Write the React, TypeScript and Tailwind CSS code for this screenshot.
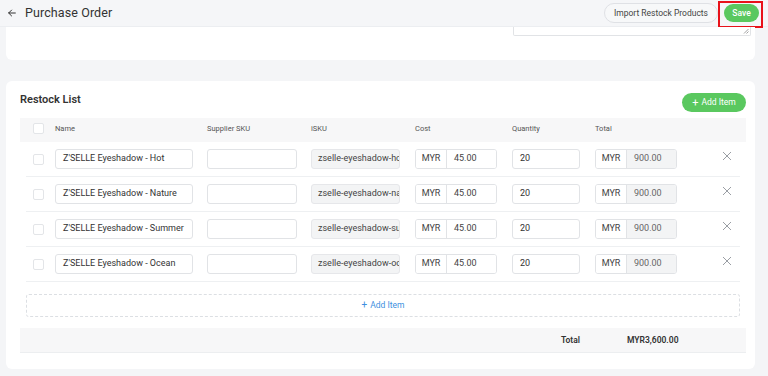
import React from "react";

interface RestockItem {
  name: string;
  isku: string;
  cost: string;
  quantity: string;
  total: string;
}

const items: RestockItem[] = [
  { name: "Z'SELLE Eyeshadow - Hot", isku: "zselle-eyeshadow-hot", cost: "45.00", quantity: "20", total: "900.00" },
  { name: "Z'SELLE Eyeshadow - Nature", isku: "zselle-eyeshadow-nature", cost: "45.00", quantity: "20", total: "900.00" },
  { name: "Z'SELLE Eyeshadow - Summer", isku: "zselle-eyeshadow-summer", cost: "45.00", quantity: "20", total: "900.00" },
  { name: "Z'SELLE Eyeshadow - Ocean", isku: "zselle-eyeshadow-ocean", cost: "45.00", quantity: "20", total: "900.00" },
];

// column template shared by header and rows
const cols = "grid grid-cols-[35px_152px_104px_104px_97px_83px_127px_1fr] items-center";

const Checkbox = () => (
  <div className="ml-[13px] w-[11px] h-[11px] rounded-[2px] border border-[#e3e5e8] bg-white" />
);

const AddonInput = ({ value, readOnly }: { value: string; readOnly?: boolean }) => (
  <div className="flex w-[82px] h-[20px] rounded-[3px] border border-[#e1e3e6] overflow-hidden text-[9px] text-[#444]">
    <div className="w-[31px] flex items-center justify-center border-r border-[#e1e3e6] bg-white">MYR</div>
    <div className={"flex-1 flex items-center pl-[7px] " + (readOnly ? "bg-[#f3f4f5] text-[#666]" : "bg-white")}>
      {value}
    </div>
  </div>
);

const App: React.FC = () => {
  return (
    <div
      className="w-[768px] h-[376px] overflow-hidden bg-[#f4f5f7] text-[#333]"
      style={{ fontFamily: "Roboto, 'Noto Sans', sans-serif" }}
    >
      {/* Top bar */}
      <div className="relative h-[27px] flex items-center justify-between bg-[#f5f6f8] border-b border-[#eceef1] pl-[6px] pr-[9px]">
        <div className="flex items-center">
          <svg width="10" height="10" viewBox="0 0 24 24" fill="none" stroke="#333" strokeWidth="2.4" strokeLinecap="round" strokeLinejoin="round" className="ml-[1px]">
            <path d="M20 12H4" />
            <path d="M11 5l-7 7 7 7" />
          </svg>
          <span className="ml-[8px] text-[12.5px] text-[#333] tracking-[0.1px]">Purchase Order</span>
        </div>
        <div className="flex items-center gap-[6px]">
          <button className="h-[20px] px-[9px] rounded-full border border-[#dfe1e5] bg-[#f7f8f9] text-[8.5px] text-[#444]">
            Import Restock Products
          </button>
          <button className="h-[18px] w-[35px] rounded-full bg-[#5ac85f] text-white text-[8.5px] font-medium">
            Save
          </button>
        </div>
        <div className="absolute right-[5px] top-[1px] w-[45px] h-[27px] border-2 border-[#e8121a]" />
      </div>

      {/* Previous card (cut off) */}
      <div className="mx-[6px] mr-[13px] h-[33px] bg-white rounded-b-[6px] relative">
        <div className="absolute left-[507px] right-[4px] top-0 h-[9px] border border-t-0 border-[#e1e3e6] rounded-b-[2px]">
          <svg width="6" height="6" viewBox="0 0 6 6" className="absolute right-[1px] bottom-[1px]" stroke="#888" strokeWidth="0.8">
            <path d="M5.5 1L1 5.5M5.5 3.5L3.5 5.5" />
          </svg>
        </div>
      </div>

      {/* Restock list card */}
      <div className="mt-[21px] ml-[6px] mr-[13px] h-[288px] bg-white rounded-[6px] pl-[14px] pr-[9px] pt-[12px]">
        <div className="flex items-center justify-between h-[19px]">
          <span className="text-[11px] font-semibold text-[#333] -mt-[5px]">Restock List</span>
          <button className="h-[19px] w-[64px] rounded-full bg-[#5ac85f] text-white text-[8.5px] flex items-center justify-center gap-[3px]">
            <span className="text-[11px] leading-none -mt-[1px]">+</span>
            <span>Add Item</span>
          </button>
        </div>

        {/* table header */}
        <div className={cols + " mt-[6px] h-[24px] pb-[3px] bg-[#f7f7f8] text-[7.5px] text-[#555]"}>
          <Checkbox />
          <span>Name</span>
          <span>Supplier SKU</span>
          <span>iSKU</span>
          <span>Cost</span>
          <span>Quantity</span>
          <span>Total</span>
          <span />
        </div>

        {/* rows */}
        {items.map((item) => (
          <div key={item.name} className="mx-[6px] border-b border-[#eef0f2]">
            <div className={cols + " h-[34px] -mx-[6px]"}>
              <Checkbox />
              <div className="w-[138px] h-[20px] rounded-[3px] border border-[#e1e3e6] flex items-center pl-[7px] text-[9px] text-[#333] whitespace-nowrap overflow-hidden">
                {item.name}
              </div>
              <div className="w-[90px] h-[20px] rounded-[3px] border border-[#e1e3e6]" />
              <div className="w-[89px] h-[20px] rounded-[3px] border border-[#e6e7ea] bg-[#f3f4f5] flex items-center pl-[6px] text-[9px] text-[#444] whitespace-nowrap overflow-hidden">
                {item.isku}
              </div>
              <AddonInput value={item.cost} />
              <div className="w-[68px] h-[20px] rounded-[3px] border border-[#e1e3e6] flex items-center pl-[7px] text-[9px] text-[#333]">
                {item.quantity}
              </div>
              <AddonInput value={item.total} readOnly />
              <svg width="10" height="10" viewBox="0 0 10 10" stroke="#9a9ea4" strokeWidth="1" className="-mt-[7px]">
                <path d="M1 1l8 8M9 1l-8 8" />
              </svg>
            </div>
          </div>
        ))}

        {/* add item dashed */}
        <div className="mt-[12px] mx-[6px] h-[23px] border border-dashed border-[#dcdfe3] rounded-[3px] flex items-center justify-center gap-[3px] text-[8.5px] text-[#3d8fe0]">
          <span className="text-[10px] leading-none -mt-[1px]">+</span>
          <span>Add Item</span>
        </div>

        {/* total row */}
        <div className={cols + " mt-[11px] h-[25px] bg-[#f7f7f8] border-b border-[#eceef0] text-[8.5px] font-semibold text-[#333]"}>
          <span />
          <span />
          <span />
          <span />
          <span />
          <span className="text-right pr-[15px]">Total</span>
          <span className="pl-[32px]">MYR3,600.00</span>
          <span />
        </div>
      </div>
    </div>
  );
};

export default App;
